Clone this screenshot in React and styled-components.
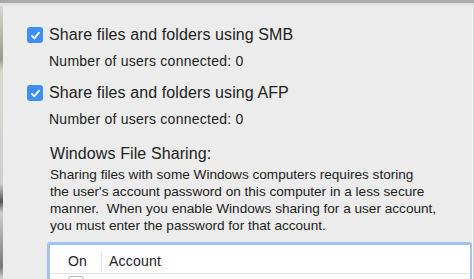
import styled, { createGlobalStyle } from "styled-components";

const Global = createGlobalStyle`
  html, body {
    margin: 0;
    padding: 0;
    width: 474px;
    height: 279px;
    overflow: hidden;
    background: #ececec;
    font-family: "Liberation Sans", Arial, sans-serif;
    color: #222;
  }
`;

const Frame = styled.div`
  width: 474px;
  height: 279px;
  display: flex;
  flex-direction: column;
  overflow: hidden;
`;

const TopBar = styled.div`
  height: 3px;
  background: #a9a9a9;
  border-bottom: 3px solid #e3e3e3;
  flex-shrink: 0;
`;

const Body = styled.div`
  flex: 1;
  display: flex;
`;

const SideStrip = styled.div`
  width: 3px;
  background: linear-gradient(
    180deg,
    #d8d8d2 0%,
    #9a9a88 18%,
    #d8d8d2 22%,
    #cfcfcf 60%,
    #555 66%,
    #cfcfcf 70%,
    #777 88%,
    #cfcfcf 92%
  );
`;

const Panel = styled.div`
  flex: 1;
  display: flex;
  flex-direction: column;
  padding: 21px 0 0 24px;
  border-right: 1px solid #d6d6d6;
  box-shadow: inset -1px 0 0 #f6f6f6;
`;

const CheckRow = styled.label`
  display: flex;
  align-items: center;
  gap: 6px;
  font-size: 16px;
  letter-spacing: 0.1px;
  height: 16px;
  white-space: nowrap;
`;

const Box = styled.span`
  width: 16px;
  height: 16px;
  border-radius: 3px;
  background: ${(p) => (p.$on ? "#3d8ff6" : "#fff")};
  border: ${(p) => (p.$on ? "none" : "1px solid #b8b8b8")};
  box-sizing: border-box;
  display: flex;
  align-items: center;
  justify-content: center;
  flex-shrink: 0;
`;

const Status = styled.div`
  font-size: 14px;
  letter-spacing: 0.25px;
  line-height: 15px;
  margin: 11px 0 0 22px;
  height: 15px;
`;

const Group = styled.div`
  display: flex;
  flex-direction: column;
  margin-bottom: ${(p) => p.$mb || 0}px;
`;

const Section = styled.div`
  margin-left: 23px;
  display: flex;
  flex-direction: column;
`;

const Heading = styled.div`
  font-size: 16px;
  letter-spacing: 0.1px;
  line-height: 19px;
  height: 19px;
`;

const Para = styled.p`
  margin: 4px 0 0;
  font-size: 13.6px;
  line-height: 16.9px;
  white-space: pre;
`;

const Table = styled.div`
  margin: 7px 0 0 -3px;
  width: 425px;
  background: #fff;
  border: 3px solid #a2c3ef;
  border-right-width: 2px;
  border-radius: 3px 3px 0 0;
  box-sizing: border-box;
  height: 60px;
`;

const HeadRow = styled.div`
  display: flex;
  height: 29px;
  border-bottom: 1px solid #e4e4e4;
  align-items: center;
  font-size: 14px;
  letter-spacing: 0.2px;
  padding-top: 5px;
  box-sizing: border-box;
`;

const HeadCell = styled.div`
  width: ${(p) => p.$w || "auto"};
  flex: ${(p) => (p.$w ? "none" : 1)};
  padding-left: ${(p) => p.$pl}px;
  height: 19px;
  display: flex;
  align-items: center;
  border-right: ${(p) => (p.$sep ? "1px solid #e2e2e2" : "none")};
  box-sizing: border-box;
`;

const Row = styled.div`
  display: flex;
  align-items: flex-start;
  height: 20px;
  font-size: 13px;
`;

const RowCheck = styled.div`
  width: 52px;
  padding: 2px 0 0 18px;
  box-sizing: border-box;
`;

const Tick = () => (
  <svg width="11" height="11" viewBox="0 0 11 11">
    <path
      d="M2 5.8 L4.4 8.3 L9 2.6"
      fill="none"
      stroke="#fff"
      strokeWidth="1.8"
      strokeLinecap="round"
      strokeLinejoin="round"
    />
  </svg>
);

export default function App() {
  return (
    <>
      <Global />
      <Frame>
        <TopBar />
        <Body>
          <SideStrip />
          <Panel>
            <Group $mb={16}>
              <CheckRow>
                <Box $on>
                  <Tick />
                </Box>
                Share files and folders using SMB
              </CheckRow>
              <Status>Number of users connected: 0</Status>
            </Group>
            <Group $mb={17}>
              <CheckRow>
                <Box $on>
                  <Tick />
                </Box>
                Share files and folders using AFP
              </CheckRow>
              <Status>Number of users connected: 0</Status>
            </Group>
            <Section>
              <Heading>Windows File Sharing:</Heading>
              <Para>
                {"Sharing files with some Windows computers requires storing\nthe user's account password on this computer in a less secure\nmanner.  When you enable Windows sharing for a user account,\nyou must enter the password for that account."}
              </Para>
              <Table>
                <HeadRow>
                  <HeadCell $w="52px" $pl={18} $sep>
                    On
                  </HeadCell>
                  <HeadCell $pl={7}>Account</HeadCell>
                </HeadRow>
                <Row>
                  <RowCheck>
                    <Box />
                  </RowCheck>
                </Row>
              </Table>
            </Section>
          </Panel>
        </Body>
      </Frame>
    </>
  );
}
